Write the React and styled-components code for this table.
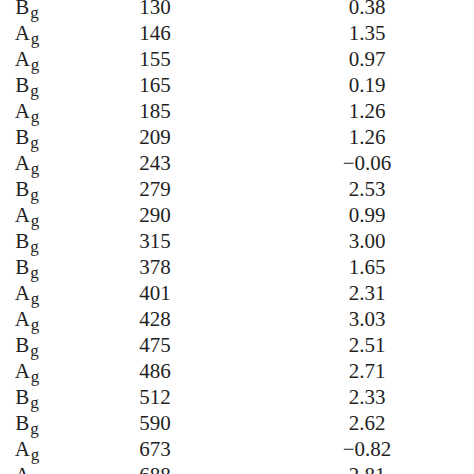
import React from "react";
import styled, { createGlobalStyle } from "styled-components";

const rows = [
  ["B", "130", "0.38"],
  ["A", "146", "1.35"],
  ["A", "155", "0.97"],
  ["B", "165", "0.19"],
  ["A", "185", "1.26"],
  ["B", "209", "1.26"],
  ["A", "243", "\u22120.06"],
  ["B", "279", "2.53"],
  ["A", "290", "0.99"],
  ["B", "315", "3.00"],
  ["B", "378", "1.65"],
  ["A", "401", "2.31"],
  ["A", "428", "3.03"],
  ["B", "475", "2.51"],
  ["A", "486", "2.71"],
  ["B", "512", "2.33"],
  ["B", "590", "2.62"],
  ["A", "673", "\u22120.82"],
  ["A", "688", "2.81"],
];

const GlobalStyle = createGlobalStyle`
  html, body {
    margin: 0;
    padding: 0;
    background: #ffffff;
    overflow: hidden;
  }
  body {
    width: 474px;
    height: 474px;
  }
`;

const Table = styled.div`
  margin-top: -6px;
  display: grid;
  grid-template-columns: 54px 202px 222px;
  font-family: "Liberation Serif", "DejaVu Serif", serif;
  font-size: 21px;
  color: #1f1f1f;
`;

const Cell = styled.div`
  height: 26px;
  line-height: 26px;
  text-align: center;
  white-space: nowrap;
`;

const Sub = styled.sub`
  font-size: 17px;
  vertical-align: -4px;
  line-height: 0;
  margin-left: 1px;
`;

export default function App() {
  return (
    <>
      <GlobalStyle />
      <Table>
        {rows.map(([sym, freq, val], i) => (
          <React.Fragment key={i}>
            <Cell>
              {sym}
              <Sub>g</Sub>
            </Cell>
            <Cell>{freq}</Cell>
            <Cell>{val}</Cell>
          </React.Fragment>
        ))}
      </Table>
    </>
  );
}
